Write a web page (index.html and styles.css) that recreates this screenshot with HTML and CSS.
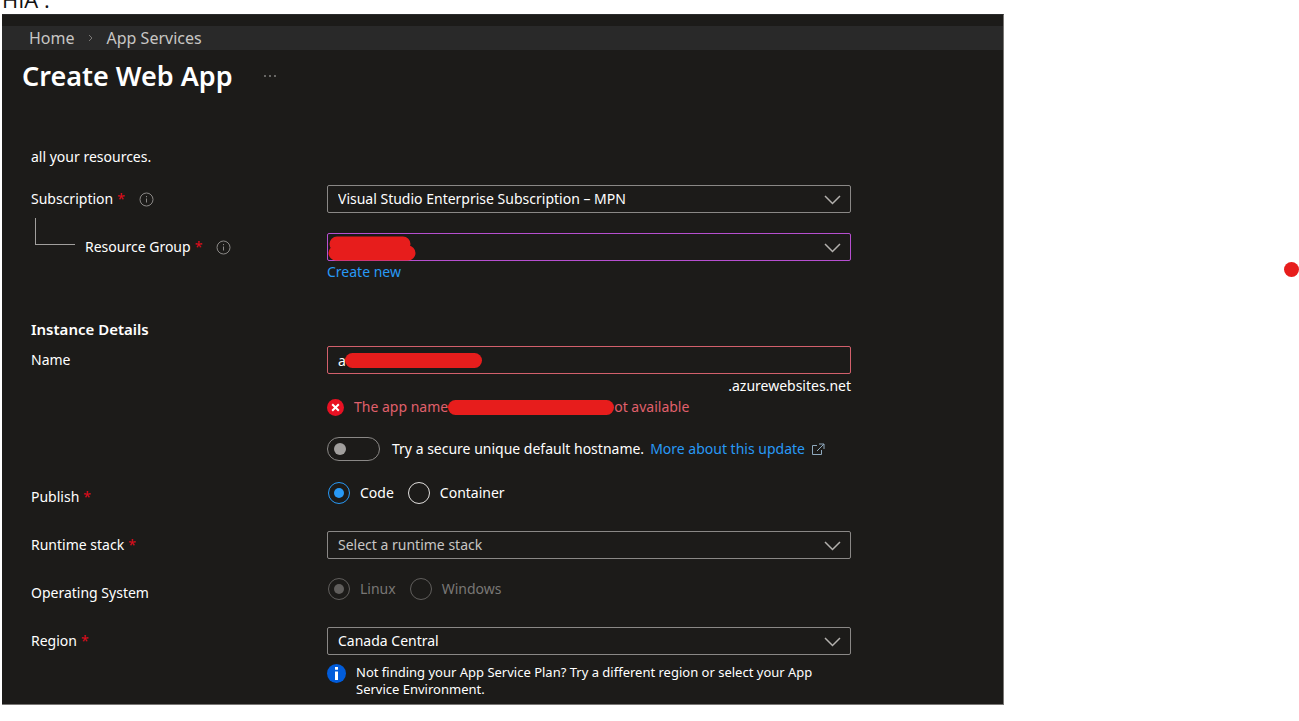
FILE: index.html
```html
<!DOCTYPE html>
<html lang="en">
  <head>
    <meta charset="UTF-8" />
    <title>Create Web App</title>
    <link rel="stylesheet" href="styles.css">
  </head>
  <body>
    <p class="post-text"><span>HIA :</span></p>

    <div class="portal">
      <nav class="breadcrumb">
        <a href="#">Home</a>
        <svg width="6" height="8" viewBox="0 0 6 8"><path d="M1 1l3 3-3 3" fill="none" stroke="#797775" /></svg>
        <a href="#">App Services</a>
      </nav>

      <header class="title-bar">
        <h1>Create Web App</h1>
        <button class="more" aria-label="More">
          <svg width="14" height="4" viewBox="0 0 14 4" fill="#c8c6c4"><circle cx="2" cy="2" r="0.8" /><circle cx="7" cy="2" r="0.8" /><circle cx="12" cy="2" r="0.8" /></svg>
        </button>
      </header>

      <form class="form">
        <p class="intro">all your resources.</p>

        <div class="row">
          <div class="label">
            <label for="subscription">Subscription</label> <span class="req">*</span>
            <svg class="info" width="15" height="15" viewBox="0 0 15 15"><circle cx="7.5" cy="7.5" r="6.5" fill="none" stroke="#8a8886" /><path d="M7.5 6.5v4M7.5 4v1.2" stroke="#8a8886" /></svg>
          </div>
          <div class="select-wrap">
            <select id="subscription">
              <option>Visual Studio Enterprise Subscription – MPN</option>
            </select>
            <svg class="chevron" width="17" height="10" viewBox="0 0 17 10"><path d="M1 1l7.500 7.500L16 1" /></svg>
          </div>
        </div>

        <div class="row">
          <div class="label child">
            <span class="branch"></span>
            <label for="group">Resource Group</label> <span class="req">*</span>
            <svg class="info" width="15" height="15" viewBox="0 0 15 15"><circle cx="7.5" cy="7.5" r="6.5" fill="none" stroke="#8a8886" /><path d="M7.5 6.5v4M7.5 4v1.2" stroke="#8a8886" /></svg>
          </div>
          <div>
            <div class="select-wrap">
              <select id="group" class="focused">
                <option></option>
              </select>
              <svg class="chevron" width="17" height="10" viewBox="0 0 17 10"><path d="M1 1l7.500 7.500L16 1" /></svg>
              <svg class="mark mark-group" width="90" height="25" viewBox="0 0 90 25"><path d="M10 8H76M9 17H81" fill="none" stroke="#e71d1c" stroke-width="15" stroke-linecap="round" /></svg>
            </div>
            <a class="create" href="#">Create new</a>
          </div>
        </div>

        <h2>Instance Details</h2>

        <div class="row row-name">
          <div class="label"><label for="name">Name</label></div>
          <div>
            <div class="select-wrap">
              <input type="text" id="name" class="invalid" value="a" />
              <span class="mark mark-name"></span>
            </div>
            <div class="suffix">.azurewebsites.net</div>
            <div class="error">
              <svg width="17" height="17" viewBox="0 0 17 17"><circle cx="8.500" cy="8.500" r="8.500" fill="#e81123" /><path d="M5.200 5.200l6.600 6.600M11.800 5.200l-6.600 6.600" stroke="#fff" stroke-width="2" /></svg>
              <span class="error-text">The app name<span class="redact"></span>ot available</span>
            </div>
            <div class="hostname">
              <input type="checkbox" id="secure" class="toggle" />
              <label for="secure">Try a secure unique default hostname.</label>
              <a href="#">More about this update</a>
              <svg width="14" height="13" viewBox="0 0 14 13" fill="none" stroke="#8fa9bd"><path d="M6 2.500H1.500v9h9V7M8 1h5v5M13 1L6 8" /></svg>
            </div>
          </div>
        </div>

        <div class="row">
          <div class="label">Publish <span class="req">*</span></div>
          <div class="radios">
            <input type="radio" name="publish" id="code" checked /><label for="code">Code</label>
            <input type="radio" name="publish" id="container" /><label for="container">Container</label>
          </div>
        </div>

        <div class="row">
          <div class="label"><label for="stack">Runtime stack</label> <span class="req">*</span></div>
          <div class="select-wrap">
            <select id="stack" class="placeholder">
              <option>Select a runtime stack</option>
            </select>
            <svg class="chevron" width="17" height="10" viewBox="0 0 17 10"><path d="M1 1l7.500 7.500L16 1" /></svg>
          </div>
        </div>

        <div class="row">
          <div class="label">Operating System</div>
          <div class="radios">
            <input type="radio" name="os" id="linux" checked disabled /><label for="linux">Linux</label>
            <input type="radio" name="os" id="windows" disabled /><label for="windows">Windows</label>
          </div>
        </div>

        <div class="row">
          <div class="label"><label for="region">Region</label> <span class="req">*</span></div>
          <div>
            <div class="select-wrap">
              <select id="region">
                <option>Canada Central</option>
              </select>
              <svg class="chevron" width="17" height="10" viewBox="0 0 17 10"><path d="M1 1l7.500 7.500L16 1" /></svg>
            </div>
            <div class="note">
              <svg width="19" height="19" viewBox="0 0 19 19"><circle cx="9.500" cy="9.500" r="9.500" fill="#015cda" /><path d="M9.500 7.500V16M9.500 3v2.800" stroke="#fff" stroke-width="3" /></svg>
              <p>Not finding your App Service Plan? Try a different region or select your App Service Environment.</p>
            </div>
          </div>
        </div>
      </form>
    </div>

    <span class="dot"></span>
  </body>
</html>
```
FILE: styles.css
```css
* {
  box-sizing: border-box;
}

body {
  margin: 0;
  background: #fff;
  font-family: "Noto Sans", "Segoe UI", sans-serif;
  font-size: 14px;
  line-height: 20px;
  position: relative;
}

p,
h1,
h2 {
  margin: 0;
}

a {
  color: #2899f5;
  text-decoration: none;
}

.post-text {
  height: 14px;
  overflow: hidden;
  display: flex;
  align-items: flex-end;
  padding: 0 0 5px 2px;
  font-family: "Open Sans", sans-serif;
  font-size: 22px;
  line-height: 20px;
  color: #111;
}

.portal {
  max-width: 1002px;
  margin-left: 2px;
  padding-top: 11px;
  background: #1c1b19;
  border-top: 1px solid #2b2b2b;
  border-right: 1px solid #797775;
  border-bottom: 1px solid #797775;
  color: #fff;
}

.breadcrumb {
  display: flex;
  align-items: center;
  gap: 13px;
  height: 24px;
  padding-left: 27px;
  background: #292929;
  font-size: 16px;
}

.breadcrumb a {
  color: #c8c6c4;
}

.title-bar {
  display: flex;
  align-items: center;
  gap: 30px;
  height: 52px;
  padding-left: 20px;
}

h1 {
  font-size: 27px;
  font-weight: 600;
  line-height: 32px;
}

.more {
  display: flex;
  padding: 0;
  border: none;
  background: none;
}

.form {
  display: flex;
  flex-direction: column;
  gap: 20px;
  padding: 45px 29px 6px;
}

.intro {
  margin-bottom: -2px;
}

.row {
  display: grid;
  grid-template-columns: 296px minmax(0, 524px);
}

.label {
  display: flex;
  align-items: center;
  gap: 4px;
  height: 28px;
}

.req {
  color: #e00b1c;
}

.info {
  margin-left: 10px;
}

.child {
  position: relative;
  padding-left: 54px;
}

.branch {
  position: absolute;
  left: 4px;
  bottom: 16px;
  width: 40px;
  height: 27px;
  border-left: 1px solid #a19f9d;
  border-bottom: 1px solid #a19f9d;
}

.select-wrap {
  position: relative;
}

select,
input[type="text"] {
  display: block;
  width: 100%;
  height: 28px;
  padding: 0 10px;
  appearance: none;
  background: #1c1b19;
  border: 1px solid #8a8886;
  border-radius: 2px;
  color: #fff;
  font: inherit;
}

select.focused {
  border-color: #b64fd0;
}

select.placeholder {
  color: #c8c6c4;
}

input.invalid {
  border-color: #d2606c;
}

.chevron {
  position: absolute;
  right: 10px;
  top: 10px;
  fill: none;
  stroke: #b3b0ad;
  stroke-width: 1.5;
}

.mark {
  position: absolute;
}

.mark-group {
  left: 0;
  top: 3px;
}

.mark-name {
  left: 18px;
  top: 7px;
  width: 137px;
  height: 15px;
  border-radius: 8px;
  background: #e71d1c;
}

.create {
  display: block;
  margin-top: 1px;
}

h2 {
  margin-top: 17px;
  font-size: 15px;
  font-weight: 600;
  line-height: 20px;
}

.row-name {
  margin-top: -13px;
  margin-bottom: 2px;
}

.suffix {
  margin-top: 2px;
  text-align: right;
}

.error {
  display: flex;
  align-items: center;
  gap: 10px;
  margin-top: 1px;
  color: #e0606c;
}

.error-text {
  display: flex;
  align-items: center;
}

.redact {
  width: 166px;
  height: 15px;
  border-radius: 8px;
  background: #e71d1c;
}

.hostname {
  display: flex;
  align-items: center;
  gap: 6px;
  margin-top: 20px;
}

.toggle {
  width: 53px;
  height: 24px;
  margin: 0 6px 0 0;
  padding: 5px 6px;
  appearance: none;
  border: 1px solid #8a8886;
  border-radius: 12px;
}

.toggle::before {
  content: "";
  display: block;
  width: 12px;
  height: 12px;
  border-radius: 50%;
  background: #a19f9d;
}

.radios {
  display: flex;
  align-items: center;
  height: 20px;
}

.radios input {
  display: grid;
  place-items: center;
  width: 22px;
  height: 22px;
  margin: 0 10px 0 1px;
  appearance: none;
  border: 1px solid #e1dfdd;
  border-radius: 50%;
}

.radios label {
  margin-right: 13px;
}

.radios input:checked {
  border-color: #2899f5;
}

.radios input:checked::before {
  content: "";
  width: 10px;
  height: 10px;
  border-radius: 50%;
  background: #2899f5;
}

.radios input:disabled {
  border-color: #605e5c;
}

.radios input:disabled::before {
  background: #605e5c;
}

.radios input:disabled + label {
  color: #797775;
}

.note {
  display: flex;
  align-items: flex-start;
  gap: 10px;
  margin-top: 9px;
  font-size: 13px;
  line-height: 17px;
}

.note svg {
  flex: none;
}

.dot {
  position: absolute;
  top: 262px;
  right: 0;
  width: 15px;
  height: 15px;
  border-radius: 50%;
  background: #e71d1c;
}
```
